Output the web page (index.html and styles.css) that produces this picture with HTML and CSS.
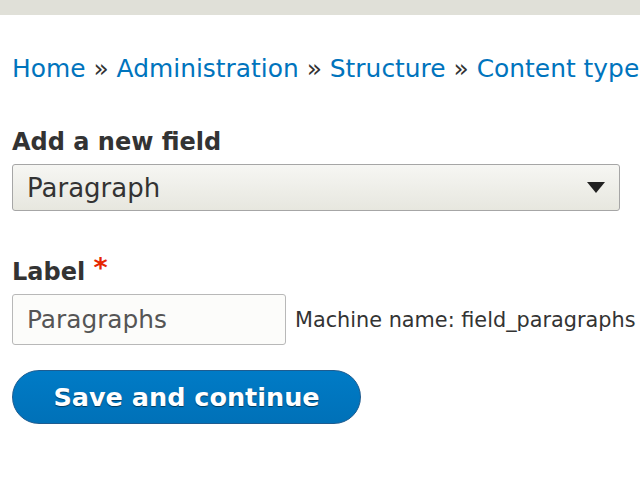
FILE: index.html
```html
<!DOCTYPE html>
<html>
<head>
<meta charset="utf-8">
<link rel="stylesheet" href="styles.css">
</head>
<body>
<div class="topbar"></div>
<main class="content">
  <nav class="breadcrumb">
    <a href="#">Home</a> <span class="sep">»</span> <a href="#">Administration</a> <span class="sep">»</span> <a href="#">Structure</a> <span class="sep">»</span> <a href="#">Content types</a>
  </nav>
  <form class="form">
    <div class="field field-first">
      <label class="label">Add a new field</label>
      <div class="select">
        <span class="select-text">Paragraph</span>
        <svg class="arrow" width="18" height="11" viewBox="0 0 18 11"><path d="M0 0 L18 0 L9 11 Z" fill="#222"/></svg>
      </div>
    </div>
    <div class="field">
      <label class="label">Label <span class="req">*</span></label>
      <div class="row">
        <div class="input">Paragraphs</div>
        <span class="machine">Machine name: field_paragraphs</span>
      </div>
    </div>
    <button type="button" class="button">Save and continue</button>
  </form>
</main>
</body>
</html>
```
FILE: styles.css
```css
html, body {
  margin: 0;
  padding: 0;
  background: #fff;
  overflow: hidden;
}
body {
  font-family: "DejaVu Sans", "Liberation Sans", sans-serif;
  color: #333;
}
.topbar {
  height: 15px;
  background: #e0e0d8;
}
.content {
  padding: 0 12px;
}
.breadcrumb {
  margin-top: 37px;
  font-size: 24.9px;
  line-height: 34px;
  white-space: nowrap;
}
.breadcrumb a {
  color: #0074bd;
  text-decoration: none;
}
.breadcrumb .sep {
  color: #333;
}
.form {
  margin-top: 41px;
}
.field {
  margin-bottom: 25px;
}
.field-first {
  margin-bottom: 45px;
}
.label {
  display: block;
  font-weight: bold;
  font-size: 24px;
  line-height: 30px;
  color: #333;
  margin-bottom: 7px;
}
.req {
  color: #e62600;
  font-size: 27px;
  position: relative;
  top: -3px;
}
.select {
  width: 608px;
  height: 47px;
  box-sizing: border-box;
  border: 1.5px solid #a6a6a6;
  border-radius: 3px;
  background: linear-gradient(#f6f6f3, #e7e7df);
  display: flex;
  align-items: center;
  justify-content: space-between;
  padding: 0 14px 0 14px;
  font-size: 26px;
  color: #333;
}
.arrow {
  display: block;
}
.row {
  display: flex;
  align-items: center;
  gap: 9px;
}
.input {
  flex: 0 0 274px;
  width: 274px;
  height: 51px;
  box-sizing: border-box;
  border: 1.5px solid #b8b8b8;
  border-radius: 3px;
  background: #fcfcfa;
  padding: 0 14px;
  display: flex;
  align-items: center;
  font-size: 24.8px;
  color: #555;
}
.machine {
  font-size: 20.8px;
  color: #333;
  white-space: nowrap;
}
.button {
  display: block;
  width: 349px;
  height: 54px;
  border: 1px solid #1e5c90;
  border-radius: 27px;
  background: linear-gradient(#007bc6, #0071b8);
  color: #fff;
  font-family: "DejaVu Sans", "Liberation Sans", sans-serif;
  font-weight: bold;
  font-size: 25.5px;
  text-shadow: 0 1px 1px rgba(0,0,0,0.5);
  padding: 0;
  margin-top: 0;
}
```
